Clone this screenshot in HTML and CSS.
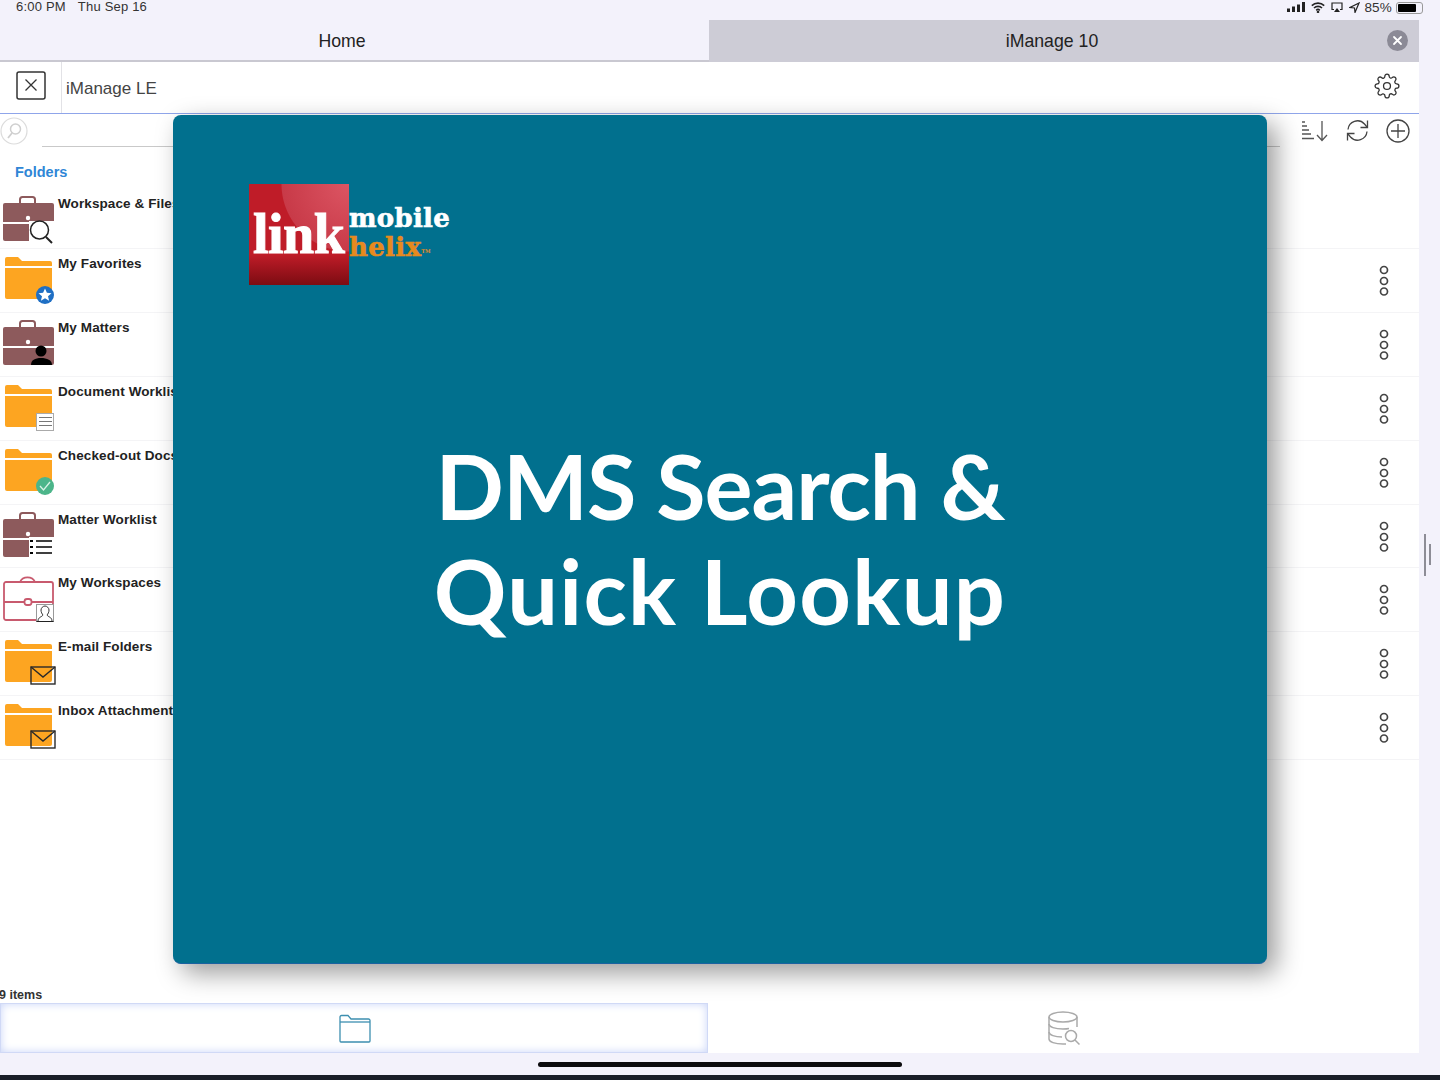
FILE: index.html
```html
<!DOCTYPE html>
<html lang="en">
<head>
    <meta charset="UTF-8">
    <meta name="viewport" content="width=device-width, initial-scale=1.0">
    <title>iManage LE</title>
    <link rel="stylesheet" href="styles.css">
</head>
<body>
    <svg class="defs" width="0" height="0">
        <defs>
            <symbol id="case" viewBox="0 0 58 52">
                <rect x="20" y="1" width="15" height="9" rx="2.5" fill="none" stroke="#8d5a5c" stroke-width="2"/>
                <path d="M3 9a2 2 0 0 1 2-2h47a2 2 0 0 1 2 2v17H3z" fill="#8d5a5c"/>
                <path d="M3 28h51v15a2 2 0 0 1-2 2H5a2 2 0 0 1-2-2z" fill="#8d5a5c"/>
                <circle cx="28" cy="22" r="2.2" fill="#fff"/>
            </symbol>
            <symbol id="folder" viewBox="0 0 58 52">
                <path d="M5 10V3a2 2 0 0 1 2-2h11l4 4h28a2 2 0 0 1 2 2v3z" fill="#fda521"/>
                <path d="M5 12h47v29a2 2 0 0 1-2 2H7a2 2 0 0 1-2-2z" fill="#fda521"/>
            </symbol>
        </defs>
    </svg>

    <div class="status-bar">
        <div class="status-left"><span>6:00 PM</span><span>Thu Sep 16</span></div>
        <div class="status-right">
            <svg width="18" height="10" viewBox="0 0 18 10"><rect x="0" y="6.5" width="3" height="3.5" fill="#222"/><rect x="5" y="4.5" width="3" height="5.5" fill="#222"/><rect x="10" y="2.500" width="3" height="7.500" fill="#222"/><rect x="15" y="0" width="3" height="10" fill="#222"/></svg>
            <svg width="14" height="11" viewBox="0 0 14 11" fill="none" stroke="#222" stroke-width="1.600"><path d="M.8 3.600a9 9 0 0 1 12.400 0"/><path d="M3 6a5.800 5.800 0 0 1 8 0"/><path d="M5.200 8.300a2.600 2.600 0 0 1 3.600 0"/><circle cx="7" cy="10" r=".5" fill="#222"/></svg>
            <svg width="12" height="11" viewBox="0 0 12 11" fill="none" stroke="#222" stroke-width="1.200"><path d="M3 7.500H1V1h10v6.500H9"/><path d="M6 6l3 4H3z" fill="#222" stroke="none"/></svg>
            <svg width="11" height="11" viewBox="0 0 11 11" fill="none" stroke="#222" stroke-width="1.200"><path d="M10 1L1 5.500l4.500 0.500L6 10.500z"/></svg>
            <span class="battery-pct">85%</span>
            <div class="battery"><div class="battery-fill"></div></div>
        </div>
    </div>

    <div class="screen">
        <div class="app">
            <div class="tabs">
                <div class="tab">Home</div>
                <div class="tab tab-active">iManage 10
                    <svg class="tab-close" width="21" height="21" viewBox="0 0 21 21"><circle cx="10.500" cy="10.500" r="10.500" fill="#8b8a96"/><path d="M7 7l7 7M14 7l-7 7" stroke="#fff" stroke-width="1.800" stroke-linecap="round"/></svg>
                </div>
            </div>

            <div class="toolbar">
                <div class="toolbar-close">
                    <svg width="30" height="29" viewBox="0 0 30 29" fill="none" stroke="#333"><rect x="1" y="1" width="28" height="27" rx="2" stroke-width="1.500"/><path d="M9.500 8.500l11 11M20.500 8.500l-11 11" stroke-width="1.300"/></svg>
                </div>
                <div class="toolbar-title">iManage LE</div>
                <svg class="gear" width="26" height="26" viewBox="0 0 24 24" fill="none" stroke="#333" stroke-width="1.200"><circle cx="12" cy="12" r="3.200"/><path d="M19.400 15a1.650 1.650 0 0 0 .33 1.820l.06.06a2 2 0 0 1 0 2.830 2 2 0 0 1-2.830 0l-.06-.06a1.650 1.650 0 0 0-1.820-.33 1.650 1.650 0 0 0-1 1.510V21a2 2 0 0 1-2 2 2 2 0 0 1-2-2v-.09A1.650 1.650 0 0 0 9 19.400a1.650 1.650 0 0 0-1.820.33l-.06.06a2 2 0 0 1-2.830 0 2 2 0 0 1 0-2.830l.06-.06a1.650 1.650 0 0 0 .33-1.820 1.650 1.650 0 0 0-1.510-1H3a2 2 0 0 1-2-2 2 2 0 0 1 2-2h.09A1.650 1.650 0 0 0 4.600 9a1.650 1.650 0 0 0-.33-1.820l-.06-.06a2 2 0 0 1 0-2.830 2 2 0 0 1 2.830 0l.06.06a1.650 1.650 0 0 0 1.820.33H9a1.650 1.650 0 0 0 1-1.510V3a2 2 0 0 1 2-2 2 2 0 0 1 2 2v.09a1.650 1.650 0 0 0 1 1.510 1.650 1.650 0 0 0 1.820-.33l.06-.06a2 2 0 0 1 2.830 0 2 2 0 0 1 0 2.830l-.06.06a1.650 1.650 0 0 0-.33 1.820V9a1.650 1.650 0 0 0 1.510 1H21a2 2 0 0 1 2 2 2 2 0 0 1-2 2h-.09a1.650 1.650 0 0 0-1.510 1z"/></svg>
            </div>

            <div class="search-row">
                <svg class="search-icon" width="28" height="28" viewBox="0 0 28 28" fill="none"><circle cx="14" cy="14" r="13" stroke="#dcdcdc" stroke-width="1.200"/><circle cx="15.500" cy="12" r="5" stroke="#cfcfcf" stroke-width="1.500"/><path d="M12 16l-4 5" stroke="#cfcfcf" stroke-width="1.800"/></svg>
                <div class="search-line"></div>
                <div class="search-actions">
                    <svg width="28" height="22" viewBox="0 0 28 22" fill="none" stroke="#555" stroke-width="1.300"><path d="M1 2h3M1 6h5M1 10h7M1 14h9M1 18.500h12"/><path d="M21 1v19M16 15l5 5.500 5-5.500"/></svg>
                    <svg width="23" height="23" viewBox="0 0 23 23" fill="none" stroke="#444" stroke-width="1.300"><path d="M2 10.500A9.500 9.500 0 0 1 18.500 5l2.500 3"/><path d="M21.500 1.500V8.500h-7"/><path d="M21 12.500A9.500 9.500 0 0 1 4.500 18L2 15"/><path d="M1.500 21.500V14.500h7"/></svg>
                    <svg width="24" height="24" viewBox="0 0 24 24" fill="none" stroke="#444" stroke-width="1.300"><circle cx="12" cy="12" r="11"/><path d="M12 5v14M5 12h14"/></svg>
                </div>
            </div>

            <div class="section-title">Folders</div>

            <div class="list">
                <div class="row row-first">
                    <svg class="row-icon" viewBox="0 0 58 52">
                        <use href="#case"/>
                        <rect x="29" y="25" width="27" height="24" fill="#fff"/>
                        <circle cx="39.500" cy="34" r="9" fill="#fff" stroke="#222" stroke-width="1.500"/>
                        <path d="M46 41l6 6" stroke="#222" stroke-width="2"/>
                    </svg>
                    <div class="row-label">Workspace &amp; Files</div>
                </div>
                <div class="row">
                    <svg class="row-icon" viewBox="0 0 58 52">
                        <use href="#folder"/>
                        <circle cx="45" cy="39" r="9" fill="#1f6fc4"/>
                        <path d="M45 32.500l1.900 4.300 4.600.4-3.500 3 1.100 4.500-4.100-2.400-4.100 2.400 1.100-4.500-3.500-3 4.600-.4z" fill="#fff"/>
                    </svg>
                    <div class="row-label">My Favorites</div>
                    <svg class="more" width="12" height="32" viewBox="0 0 12 32"><circle cx="6" cy="5" r="3.500"/><circle cx="6" cy="16" r="3.500"/><circle cx="6" cy="26.500" r="3.500"/></svg>
                </div>
                <div class="row">
                    <svg class="row-icon" viewBox="0 0 58 52">
                        <use href="#case"/>
                        <circle cx="41" cy="31" r="5.500" fill="#000"/>
                        <path d="M31 45c0-5 4-7 10-7s11 2 11 7z" fill="#000"/>
                    </svg>
                    <div class="row-label">My Matters</div>
                    <svg class="more" width="12" height="32" viewBox="0 0 12 32"><circle cx="6" cy="5" r="3.500"/><circle cx="6" cy="16" r="3.500"/><circle cx="6" cy="26.500" r="3.500"/></svg>
                </div>
                <div class="row">
                    <svg class="row-icon" viewBox="0 0 58 52">
                        <use href="#folder"/>
                        <rect x="36.500" y="29.500" width="17" height="17" fill="#fff" stroke="#aaa"/>
                        <path d="M39 33.500h13M39 37.500h13M39 41.500h13" stroke="#777"/>
                    </svg>
                    <div class="row-label">Document Worklist</div>
                    <svg class="more" width="12" height="32" viewBox="0 0 12 32"><circle cx="6" cy="5" r="3.500"/><circle cx="6" cy="16" r="3.500"/><circle cx="6" cy="26.500" r="3.500"/></svg>
                </div>
                <div class="row">
                    <svg class="row-icon" viewBox="0 0 58 52">
                        <use href="#folder"/>
                        <circle cx="45" cy="38" r="9" fill="#4cb58a"/>
                        <path d="M40 38l3.500 4 6.500-8" fill="none" stroke="#d8f2e6" stroke-width="1.300"/>
                    </svg>
                    <div class="row-label">Checked-out Docs</div>
                    <svg class="more" width="12" height="32" viewBox="0 0 12 32"><circle cx="6" cy="5" r="3.500"/><circle cx="6" cy="16" r="3.500"/><circle cx="6" cy="26.500" r="3.500"/></svg>
                </div>
                <div class="row">
                    <svg class="row-icon" viewBox="0 0 58 52">
                        <use href="#case"/>
                        <rect x="29" y="25" width="27" height="24" fill="#fff"/>
                        <path d="M30 29h3M30 35h3M30 41h3" stroke="#000" stroke-width="2"/>
                        <path d="M36 29h16M36 35h16M36 41h16" stroke="#000" stroke-width="1.600"/>
                    </svg>
                    <div class="row-label">Matter Worklist</div>
                    <svg class="more" width="12" height="32" viewBox="0 0 12 32"><circle cx="6" cy="5" r="3.500"/><circle cx="6" cy="16" r="3.500"/><circle cx="6" cy="26.500" r="3.500"/></svg>
                </div>
                <div class="row">
                    <svg class="row-icon" viewBox="0 0 58 52">
                        <g fill="none" stroke="#c85a6e" stroke-width="1.800">
                            <path d="M20 7a8 7 0 0 1 15 0"/>
                            <rect x="4" y="7" width="49" height="38" rx="2"/>
                            <path d="M4 27h20M32 27h21"/>
                            <rect x="24.500" y="24" width="7" height="6" rx="2.500"/>
                        </g>
                        <rect x="36.500" y="29.500" width="17" height="17" fill="#fff" stroke="#999"/>
                        <path d="M38 46c0-4 4-4 5-6-1-1-2-3-2-5 0-2 2-4 4-4s4 2 4 4c0 2-1 4-2 5 1 2 5 2 5 6" fill="none" stroke="#333"/>
                        <path d="M36.500 46.500h17" stroke="#222"/>
                    </svg>
                    <div class="row-label">My Workspaces</div>
                    <svg class="more" width="12" height="32" viewBox="0 0 12 32"><circle cx="6" cy="5" r="3.500"/><circle cx="6" cy="16" r="3.500"/><circle cx="6" cy="26.500" r="3.500"/></svg>
                </div>
                <div class="row">
                    <svg class="row-icon" viewBox="0 0 58 52">
                        <use href="#folder"/>
                        <rect x="31" y="28" width="24" height="17" fill="none" stroke="#2a2a2a" stroke-width="1.400"/>
                        <path d="M31 28l12 10 12-10" fill="none" stroke="#2a2a2a" stroke-width="1.400"/>
                    </svg>
                    <div class="row-label">E-mail Folders</div>
                    <svg class="more" width="12" height="32" viewBox="0 0 12 32"><circle cx="6" cy="5" r="3.500"/><circle cx="6" cy="16" r="3.500"/><circle cx="6" cy="26.500" r="3.500"/></svg>
                </div>
                <div class="row">
                    <svg class="row-icon" viewBox="0 0 58 52">
                        <use href="#folder"/>
                        <rect x="31" y="28" width="24" height="17" fill="none" stroke="#2a2a2a" stroke-width="1.400"/>
                        <path d="M31 28l12 10 12-10" fill="none" stroke="#2a2a2a" stroke-width="1.400"/>
                    </svg>
                    <div class="row-label">Inbox Attachments</div>
                    <svg class="more" width="12" height="32" viewBox="0 0 12 32"><circle cx="6" cy="5" r="3.500"/><circle cx="6" cy="16" r="3.500"/><circle cx="6" cy="26.500" r="3.500"/></svg>
                </div>
            </div>

            <div class="item-count">9 items</div>

            <div class="bottom-tabs">
                <div class="bottom-tab bottom-tab-active">
                    <svg width="32" height="29" viewBox="0 0 32 29" fill="none" stroke="#3d8fb0" stroke-width="1.300"><path d="M1 27V3a1.500 1.500 0 0 1 1.500-1.500H9l3 3.500h17.500A1.500 1.500 0 0 1 31 6.500V27a1 1 0 0 1-1 1H2a1 1 0 0 1-1-1z"/><path d="M1 8h30"/></svg>
                </div>
                <div class="bottom-tab">
                    <svg width="33" height="35" viewBox="0 0 33 35" fill="none" stroke="#aaa" stroke-width="1.500"><ellipse cx="15" cy="6" rx="14" ry="5"/><path d="M1 6v22c0 3 6 5 14 5h3"/><path d="M29 6v10"/><path d="M1 13c0 3 6 5 14 5 2 0 4 0 6-.5"/><path d="M1 21c0 3 6 5 13 5"/><circle cx="23" cy="25" r="5.500"/><path d="M27 29l4.500 4.500"/></svg>
                </div>
            </div>
            <div class="home-area"><div class="home-indicator"></div></div>
        </div>

        <div class="side-strip">
            <div class="handle"></div>
            <div class="handle handle-short"></div>
        </div>
    </div>

    <div class="black-edge"></div>

    <div class="slide">
        <div class="logo">
            <div class="logo-square">link</div>
            <div class="logo-words">
                <div class="logo-mobile">mobile</div>
                <div class="logo-helix">helix<span class="logo-tm">TM</span></div>
            </div>
        </div>
        <h1 class="slide-title">
            <span class="title-line title-line-first">DMS Search &amp;</span>
            <span class="title-line title-line-second">Quick Lookup</span>
        </h1>
    </div>
</body>
</html>
```

FILE: styles.css
```css
html, body {
    margin: 0;
    height: 1080px;
    overflow: hidden;
}
body {
    position: relative;
    display: flex;
    flex-direction: column;
    background: #f3f2fb;
    font-family: "Liberation Sans", Arial, sans-serif;
    color: #222;
}
.defs {
    position: absolute;
}

/* status bar */
.status-bar {
    height: 20px;
    flex: none;
    display: flex;
    justify-content: space-between;
    padding: 0 18px 0 16px;
    font-size: 13px;
    line-height: 14px;
    color: #333;
    letter-spacing: 0.2px;
}
.status-left {
    display: flex;
    gap: 12px;
}
.status-right {
    display: flex;
    align-items: flex-start;
    gap: 6px;
    padding-top: 2px;
    line-height: 11px;
    font-size: 13.5px;
}
.battery-pct {
    margin-left: -2px;
}
.battery {
    width: 23px;
    height: 8px;
    margin: 0 -1px 0 -2px;
    border: 1px solid #999;
    border-radius: 3px;
    padding: 1px;
}
.battery-fill {
    width: 18px;
    height: 8px;
    background: #000;
    border-radius: 1px;
}

.screen {
    flex: 1;
    display: flex;
    min-height: 0;
}
.app {
    width: 1419px;
    display: flex;
    flex-direction: column;
    background: #fff;
}
.side-strip {
    flex: 1;
    display: flex;
    gap: 3px;
    padding: 514px 0 0 5px;
    background: #f3f2fb;
}
.handle {
    width: 2px;
    height: 42px;
    background: #8d8d96;
}
.handle-short {
    height: 21px;
    margin-top: 10px;
}

/* tabs */
.tabs {
    height: 42px;
    flex: none;
    display: flex;
    font-size: 17.7px;
}
.tab {
    position: relative;
    width: 709px;
    flex: none;
    box-sizing: border-box;
    display: flex;
    align-items: center;
    justify-content: center;
    padding: 2px 25px 0 0;
    background: #f3f2fb;
    border-bottom: 2px solid #c9c8d1;
    color: #222;
}
.tab-active {
    width: 710px;
    padding-right: 24px;
    background: #cdccd6;
    border-bottom-color: #cdccd6;
}
.tab-close {
    position: absolute;
    right: 11px;
    top: 10px;
}

/* toolbar */
.toolbar {
    height: 51px;
    flex: none;
    display: flex;
    align-items: center;
    border-bottom: 1px solid #8fa5ea;
    background: #fff;
}
.toolbar-close {
    width: 62px;
    height: 100%;
    box-sizing: border-box;
    flex: none;
    display: flex;
    justify-content: center;
    padding: 9px 0 0 1px;
    border-right: 1px solid #e2e2e6;
}
.toolbar-title {
    flex: 1;
    padding-left: 4px;
    padding-top: 2px;
    font-size: 17px;
    color: #444;
}
.gear {
    margin: -4px 19px 0 0;
}

/* search row */
.search-row {
    height: 33px;
    flex: none;
    display: flex;
    align-items: center;
}
.search-line {
    flex: 1;
    align-self: flex-end;
    margin-left: 14px;
    border-bottom: 1px solid #c9c9c9;
}
.search-actions {
    display: flex;
    align-items: center;
    gap: 17px;
    padding: 0 9px 0 21px;
}

.section-title {
    height: 42px;
    flex: none;
    box-sizing: border-box;
    padding: 17px 0 0 15px;
    font-size: 14.5px;
    line-height: 16px;
    font-weight: bold;
    color: #2f86d6;
}

/* folder list */
.list {
    flex: 1;
}
.row {
    height: 63.9px;
    box-sizing: border-box;
    display: grid;
    grid-template-columns: 58px 1fr 12px;
    padding-right: 29px;
    border-bottom: 1px solid #f4f4f6;
}
.row-first {
    height: 60px;
}
.row-icon {
    width: 58px;
    height: 52px;
    margin-top: 7px;
}
.row-label {
    padding-top: 7px;
    font-size: 13.5px;
    line-height: 16px;
    font-weight: bold;
    letter-spacing: 0.1px;
    color: #222;
    white-space: nowrap;
}
.more {
    margin-top: 16px;
    fill: none;
    stroke: #444;
    stroke-width: 1.700;
}

.item-count {
    height: 16px;
    flex: none;
    margin-left: -1px;
    font-size: 12.5px;
    line-height: 16px;
    font-weight: bold;
    color: #333;
}

/* bottom tabs */
.bottom-tabs {
    height: 50px;
    flex: none;
    display: flex;
}
.bottom-tab {
    flex: 1;
    display: flex;
    align-items: center;
    justify-content: center;
    padding-left: 2px;
}
.bottom-tab-active {
    box-sizing: border-box;
    flex: none;
    width: 708px;
    border: 1px solid #d0d9f6;
    box-shadow: inset 0 0 8px #c8d4f8;
}
.home-area {
    height: 22px;
    flex: none;
    display: flex;
    justify-content: center;
    padding: 9px 0 0 20px;
    box-sizing: border-box;
    background: #f3f2fb;
}
.home-indicator {
    width: 364px;
    height: 5px;
    border-radius: 3px;
    background: #0b0b0d;
}
.black-edge {
    height: 5px;
    flex: none;
    background: #1a1f28;
}

/* slide over the app */
.slide {
    position: absolute;
    left: 173px;
    top: 115px;
    width: 1094px;
    height: 849px;
    box-sizing: border-box;
    padding: 69px 0 0 76px;
    background: #01708e;
    border-bottom: 1px solid #1a62a0;
    border-radius: 8px;
    box-shadow: 9px 9px 26px rgba(0, 0, 0, 0.4);
    color: #fff;
}
.logo {
    display: flex;
    align-items: center;
}
.logo-square {
    width: 100px;
    height: 101px;
    box-sizing: border-box;
    padding: 22px 0 0 4px;
    background:
        linear-gradient(to bottom, rgba(120, 10, 16, 0) 70%, #7c0c12 100%),
        radial-gradient(circle at 100% 0, #dc5563 0, #c83a48 67px, #bf1c28 68px);
    font-family: "Liberation Serif", serif;
    font-weight: bold;
    font-size: 56px;
    line-height: 56px;
    letter-spacing: -0.5px;
    -webkit-text-stroke: 1px #fff;
}
.logo-words {
    font-family: "DejaVu Serif", serif;
    font-weight: bold;
    font-size: 26px;
    line-height: 29px;
    letter-spacing: 0.3px;
    -webkit-text-stroke: 0.6px;
}
.logo-helix {
    color: #e78a1e;
}
.logo-tm {
    font-size: 5px;
    letter-spacing: 0;
    vertical-align: 3px;
    -webkit-text-stroke: 0;
}
.slide-title {
    margin: 148px 0 0 -76px;
    font-family: "Lato", sans-serif;
    font-size: 90px;
    font-weight: 700;
    line-height: 105px;
    text-align: center;
}
.title-line {
    display: block;
}
.title-line-first {
    letter-spacing: -1px;
}
.title-line-second {
    letter-spacing: 1.3px;
}
```
